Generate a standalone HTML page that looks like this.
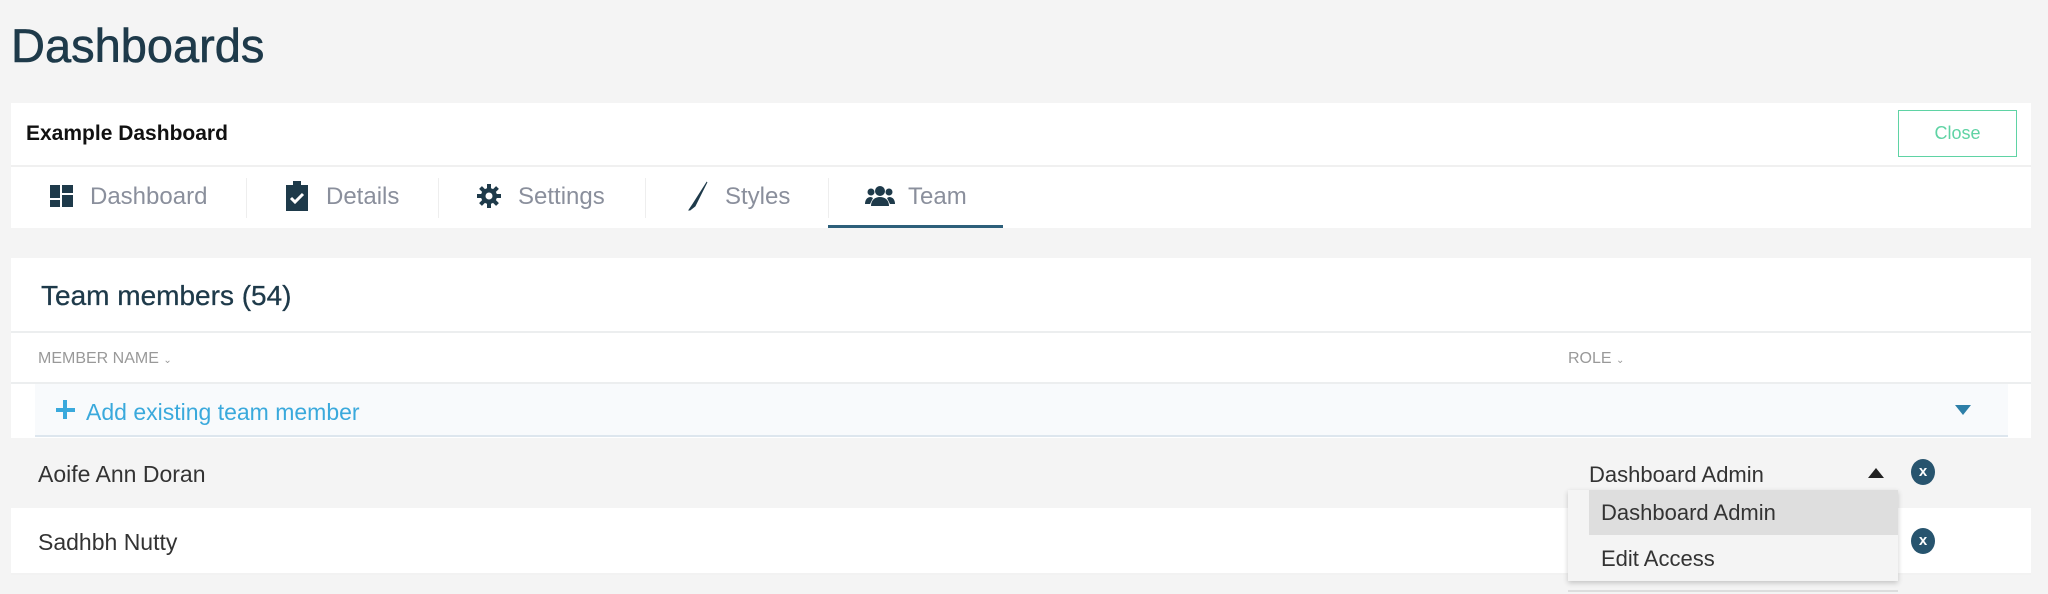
<!DOCTYPE html>
<html><head><meta charset="utf-8"><style>
*{margin:0;padding:0;box-sizing:border-box}
body{width:2048px;height:594px;background:#f4f4f4;font-family:"Liberation Sans",sans-serif;position:relative;overflow:hidden}
.a{position:absolute;white-space:nowrap}
.tab{position:absolute;top:183px;font-size:24px;color:#8a8f9c;line-height:28px}
.sep{position:absolute;top:178px;width:1px;height:40px;background:#eee}
.xc{position:absolute;width:24px;height:26px;border-radius:50%;background:#27546e;color:#fff;font-size:15px;font-weight:bold;text-align:center;line-height:25px}
</style></head><body>
<div class="a" style="left:11px;top:18px;font-size:47px;color:#1e3a4a;line-height:56px;-webkit-text-stroke:0.6px #1e3a4a">Dashboards</div>
<div class="a" style="left:11px;top:103px;width:2020px;height:125px;background:#fff"></div>
<div class="a" style="left:11px;top:165px;width:2020px;height:2px;background:#f0f0f0"></div>
<div class="a" style="left:26px;top:121px;font-size:21px;font-weight:bold;color:#111;line-height:26px">Example Dashboard</div>
<div class="a" style="left:1898px;top:110px;width:119px;height:47px;border:1.5px solid #5fd3a4;color:#5fd3a4;font-size:18px;text-align:center;line-height:44px">Close</div>
<svg class="a" style="left:50px;top:185px" width="23" height="22" viewBox="0 0 23 22"><rect x="0" y="0" width="10" height="13" fill="#1e3a4a"/><rect x="12" y="0" width="11" height="8" fill="#1e3a4a"/><rect x="0" y="15" width="10" height="7" fill="#1e3a4a"/><rect x="12" y="10" width="11" height="12" fill="#1e3a4a"/></svg>
<div class="tab" style="left:90px">Dashboard</div>
<div class="sep" style="left:246px"></div>
<svg class="a" style="left:286px;top:181px" width="22" height="30" viewBox="0 0 22 30"><rect x="0" y="4" width="22" height="26" fill="#1e3a4a"/><rect x="7" y="0" width="8" height="6" fill="#1e3a4a"/><path d="M5 17l4 4 8-8" stroke="#fff" stroke-width="3" fill="none"/></svg>
<div class="tab" style="left:326px">Details</div>
<div class="sep" style="left:438px"></div>
<svg class="a" style="left:477px;top:184px" width="24" height="24" viewBox="0 0 24 24"><g fill="#1e3a4a"><circle cx="12" cy="12" r="8"/><rect x="10" y="0" width="4" height="24"/><rect x="0" y="10" width="24" height="4"/><rect x="10" y="0" width="4" height="24" transform="rotate(45 12 12)"/><rect x="10" y="0" width="4" height="24" transform="rotate(-45 12 12)"/></g><circle cx="12" cy="12" r="3.5" fill="#fff"/></svg>
<div class="tab" style="left:518px">Settings</div>
<div class="sep" style="left:645px"></div>
<svg class="a" style="left:686px;top:181px" width="22" height="30" viewBox="0 0 22 30"><path d="M21 1L7 23 3 29 4 29 9 25 21 1z" fill="#1e3a4a" stroke="#1e3a4a" stroke-width="1"/></svg>
<div class="tab" style="left:725px">Styles</div>
<div class="sep" style="left:828px"></div>
<svg class="a" style="left:865px;top:186px" width="30" height="20" viewBox="0 0 30 20"><g fill="#1e3a4a"><circle cx="15" cy="5" r="5"/><path d="M6 20c0-6 4-9 9-9s9 3 9 9z"/><circle cx="6" cy="6" r="3.5"/><circle cx="24" cy="6" r="3.5"/><path d="M0 18c0-4 2-7 6-7l2 1-3 6z"/><path d="M30 18c0-4-2-7-6-7l-2 1 3 6z"/></g></svg>
<div class="tab" style="left:908px">Team</div>
<div class="a" style="left:828px;top:225px;width:175px;height:3px;background:#2d5f7a"></div>

<div class="a" style="left:11px;top:258px;width:2020px;height:180px;background:#fff"></div>
<div class="a" style="left:41px;top:279px;font-size:28px;color:#1e3a4a;line-height:34px;-webkit-text-stroke:0.3px #1e3a4a">Team members (54)</div>
<div class="a" style="left:11px;top:331px;width:2020px;height:2px;background:#eceeef"></div>
<div class="a" style="left:38px;top:349px;font-size:16px;color:#999;line-height:20px">MEMBER NAME <span style="font-size:10px">&#8964;</span></div>
<div class="a" style="left:1568px;top:349px;font-size:16px;color:#999;line-height:20px">ROLE <span style="font-size:10px">&#8964;</span></div>
<div class="a" style="left:11px;top:382px;width:2020px;height:2px;background:#eceeef"></div>
<div class="a" style="left:35px;top:384px;width:1973px;height:53px;background:#f8fafc;border-bottom:2px solid #dde6ee"></div>
<div class="a" style="left:63px;top:400px;width:4px;height:19px;background:#3aa9dc"></div>
<div class="a" style="left:56px;top:408px;width:19px;height:4px;background:#3aa9dc"></div>
<div class="a" style="left:86px;top:398px;font-size:23px;color:#3aa9dc;line-height:28px">Add existing team member</div>
<div class="a" style="left:1955px;top:405px;width:0;height:0;border-left:8px solid transparent;border-right:8px solid transparent;border-top:10px solid #2d7fa8"></div>

<div class="a" style="left:0;top:438px;width:2031px;height:70px;background:#f4f4f4"></div>
<div class="a" style="left:38px;top:460px;font-size:23px;color:#333;line-height:28px">Aoife Ann Doran</div>
<div class="a" style="left:1589px;top:461px;font-size:22px;color:#333;line-height:28px">Dashboard Admin</div>
<div class="a" style="left:1868px;top:468px;width:0;height:0;border-left:8px solid transparent;border-right:8px solid transparent;border-bottom:10px solid #222"></div>
<div class="xc" style="left:1911px;top:459px">x</div>

<div class="a" style="left:11px;top:508px;width:2020px;height:67px;background:#fff;border-bottom:2px solid #f2f2f2"></div>
<div class="a" style="left:38px;top:528px;font-size:23px;color:#333;line-height:28px">Sadhbh Nutty</div>
<div class="xc" style="left:1911px;top:528px">x</div>
<div class="a" style="left:1568px;top:590px;width:330px;height:2px;background:#ddd"></div>

<div class="a" style="left:1568px;top:490px;width:330px;height:91px;background:#f4f4f4;box-shadow:0 2px 5px rgba(0,0,0,.2)"></div>
<div class="a" style="left:1589px;top:490px;width:309px;height:45px;background:#dedede"></div>
<div class="a" style="left:1601px;top:499px;font-size:22px;color:#333;line-height:28px">Dashboard Admin</div>
<div class="a" style="left:1601px;top:545px;font-size:22px;color:#333;line-height:28px">Edit Access</div>
</body></html>
